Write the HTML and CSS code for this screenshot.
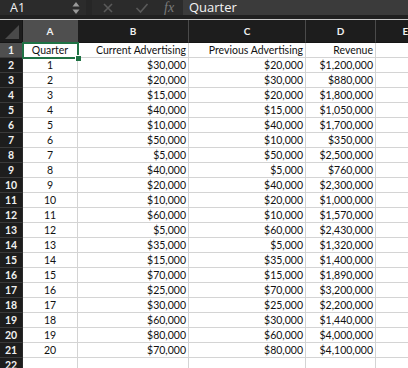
FILE: index.html
```html
<!DOCTYPE html>
<html>
<head>
<meta charset="utf-8">
<link rel="stylesheet" href="styles.css">
</head>
<body>
<div class="app">
  <div class="fbar">
    <div class="namebox">A1</div>
    <div class="spin">
      <svg width="8" height="14" viewBox="0 0 8 14"><polygon points="4,1 7.5,5.5 0.5,5.5" fill="#9a9a9a"/><polygon points="0.5,8.5 7.5,8.5 4,13" fill="#9a9a9a"/></svg>
    </div>
    <div class="sep"></div>
    <div class="tools">
      <svg class="ico" width="12" height="12" viewBox="0 0 12 12"><path d="M2 2 L10 10 M10 2 L2 10" stroke="#5a5a5a" stroke-width="1.6" fill="none"/></svg>
      <svg class="ico" width="14" height="12" viewBox="0 0 14 12"><path d="M1.5 6 L5.5 10 L12.5 2" stroke="#5a5a5a" stroke-width="1.6" fill="none"/></svg>
      <span class="fx">fx</span>
    </div>
    <div class="input">Quarter</div>
  </div>
  <div class="band"></div>
  <div class="sheet">
    <div class="corner"><svg width="22" height="22" viewBox="0 0 22 22"><polygon points="19,5 19,19 5,19" fill="#4a4a4a"/></svg></div>
    <div class="ch sel">A</div>
    <div class="ch">B</div>
    <div class="ch">C</div>
    <div class="ch">D</div>
    <div class="ch last">E</div>

    <div class="rh sel">1</div>
    <div class="c ctr active">Quarter<span class="handle"></span></div>
    <div class="c">Current Advertising</div>
    <div class="c">Previous Advertising</div>
    <div class="c">Revenue</div>
    <div class="c"></div>
  </div>
</div>
<script>
const data = [
[1,"$30,000","$20,000","$1,200,000"],
[2,"$20,000","$30,000","$880,000"],
[3,"$15,000","$20,000","$1,800,000"],
[4,"$40,000","$15,000","$1,050,000"],
[5,"$10,000","$40,000","$1,700,000"],
[6,"$50,000","$10,000","$350,000"],
[7,"$5,000","$50,000","$2,500,000"],
[8,"$40,000","$5,000","$760,000"],
[9,"$20,000","$40,000","$2,300,000"],
[10,"$10,000","$20,000","$1,000,000"],
[11,"$60,000","$10,000","$1,570,000"],
[12,"$5,000","$60,000","$2,430,000"],
[13,"$35,000","$5,000","$1,320,000"],
[14,"$15,000","$35,000","$1,400,000"],
[15,"$70,000","$15,000","$1,890,000"],
[16,"$25,000","$70,000","$3,200,000"],
[17,"$30,000","$25,000","$2,200,000"],
[18,"$60,000","$30,000","$1,440,000"],
[19,"$80,000","$60,000","$4,000,000"],
[20,"$70,000","$80,000","$4,100,000"],
["","","",""]
];
const sheet = document.querySelector('.sheet');
data.forEach((r, i) => {
  const rh = document.createElement('div');
  rh.className = 'rh';
  rh.textContent = i + 2;
  sheet.appendChild(rh);
  r.forEach((v, j) => {
    const c = document.createElement('div');
    c.className = j === 0 ? 'c ctr' : 'c';
    c.textContent = v;
    sheet.appendChild(c);
  });
  const e = document.createElement('div');
  e.className = 'c';
  sheet.appendChild(e);
});
</script>
</body>
</html>
```
FILE: styles.css
```css
html, body {
  margin: 0;
  padding: 0;
  background: #ffffff;
  overflow: hidden;
}
.app {
  width: 408px;
  height: 368px;
  overflow: hidden;
  font-family: "Lato", "Open Sans", sans-serif;
}
.fbar {
  height: 15px;
  background: #2b2b2b;
  display: flex;
  align-items: stretch;
}
.namebox {
  width: 70px;
  box-sizing: border-box;
  padding-left: 10px;
  color: #f2f2f2;
  font-family: "Open Sans", sans-serif;
  font-size: 12.5px;
  line-height: 15px;
}
.spin {
  width: 12px;
  display: flex;
  align-items: center;
  justify-content: center;
}
.sep {
  width: 6px;
  margin-left: 4px;
  background: #262626;
}
.tools {
  width: 91px;
  display: flex;
  align-items: center;
}
.tools .ico:first-child {
  margin-left: 10px;
}
.tools .ico + .ico {
  margin-left: 21px;
}
.fx {
  margin-left: 15px;
  font-family: "Liberation Serif", serif;
  font-style: italic;
  font-size: 14px;
  line-height: 15px;
  color: #7a7a7a;
}
.input {
  flex: 1;
  background: #3b3b3b;
  color: #f4f4f4;
  font-family: "Open Sans", sans-serif;
  font-size: 13px;
  line-height: 15px;
  padding-left: 6px;
}
.band {
  height: 4px;
  background: #202020;
  border-bottom: 1px solid #c9c9c9;
}
.sheet {
  display: grid;
  grid-template-columns: 23px 55px 111px 117px 70px 60px;
  grid-template-rows: 23px;
  grid-auto-rows: 15px;
  background: #fff;
}
.corner {
  background: #1d1d1d;
  border-right: 1px solid #151515;
  border-bottom: 1px solid #151515;
  box-sizing: border-box;
  display: flex;
}
.ch {
  background: #1d1d1d;
  color: #f0f0f0;
  font-size: 10px;
  font-weight: 700;
  display: flex;
  align-items: center;
  justify-content: center;
  box-sizing: border-box;
  border-right: 1px solid #4a4a4a;
  border-bottom: 1px solid #151515;
}
.ch.sel {
  background: #4f4f4f;
  border-right-color: #4f4f4f;
}
.rh {
  background: #1d1d1d;
  color: #f0f0f0;
  font-size: 10.5px;
  font-weight: 700;
  display: flex;
  align-items: center;
  justify-content: center;
  box-sizing: border-box;
  border-bottom: 1px solid #3a3a3a;
  border-right: 1px solid #2a2a2a;
}
.rh.sel {
  background: #4f4f4f;
}
.c {
  box-sizing: border-box;
  border-right: 1px solid #d4d4d4;
  border-bottom: 1px solid #d4d4d4;
  color: #111;
  font-size: 10.5px;
  line-height: 14px;
  text-align: right;
  padding-right: 2px;
  white-space: nowrap;
  overflow: visible;
}
.c.ctr {
  text-align: center;
  padding-right: 0;
}
.active {
  position: relative;
  outline: 2px solid #1f7244;
  outline-offset: -1px;
  z-index: 1;
}
.handle {
  position: absolute;
  right: -4px;
  bottom: -4px;
  width: 5px;
  height: 5px;
  background: #1f7244;
  border-top: 1px solid #fff;
  border-left: 1px solid #fff;
}
```
